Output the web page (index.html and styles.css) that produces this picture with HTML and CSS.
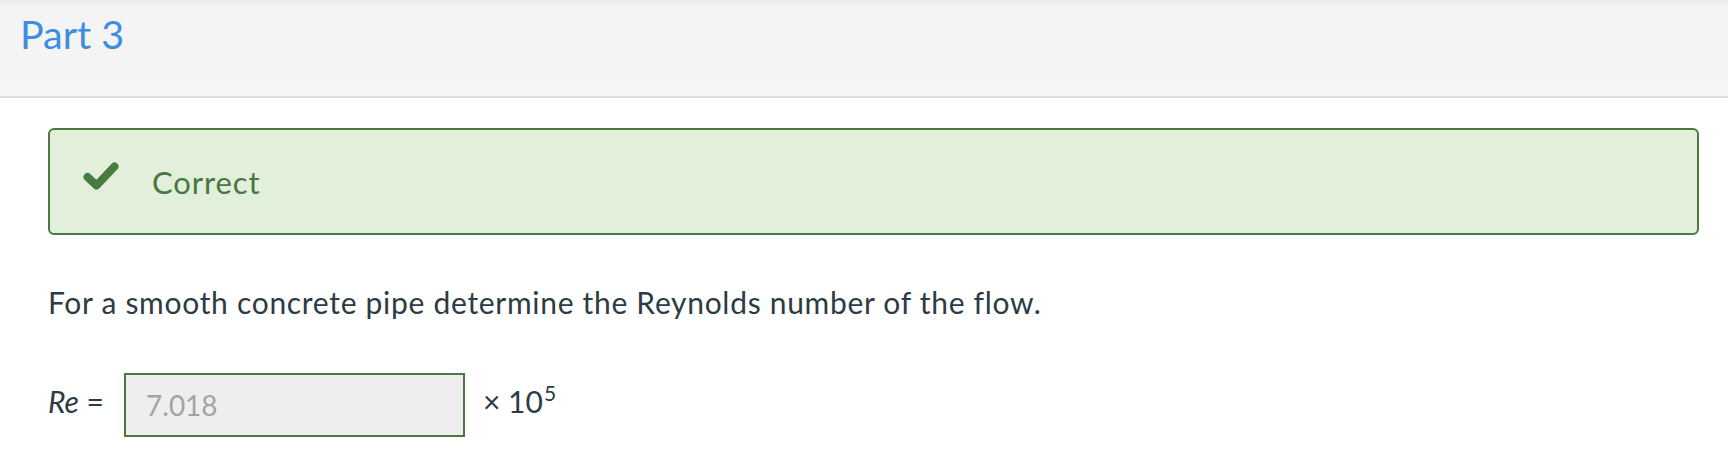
FILE: index.html
```html
<!DOCTYPE html>
<html lang="en">
<head>
<meta charset="utf-8">
<title>Part 3</title>
<link rel="stylesheet" href="styles.css">
</head>
<body>
<header class="part-header">
  <h2 class="part-title">Part 3</h2>
</header>
<main class="content">
  <div class="alert-correct">
    <svg class="check-icon" width="36" height="28" viewBox="0 0 36 28" aria-hidden="true">
      <polyline points="4.5,15 13.5,23.5 31.5,4.5" fill="none" stroke="#497a3f" stroke-width="8" stroke-linecap="round" stroke-linejoin="round"/>
    </svg>
    <span class="alert-text">Correct</span>
  </div>
  <p class="question">For a smooth concrete pipe determine the Reynolds number of the flow.</p>
  <div class="answer-row">
    <span class="answer-label"><i>Re</i> =</span>
    <div class="answer-input">7.018</div>
    <span class="answer-unit">× 10<sup>5</sup></span>
  </div>
</main>
</body>
</html>
```

FILE: styles.css
```css
html, body {
  margin: 0;
  padding: 0;
  background: #ffffff;
  font-family: Lato, "Open Sans", "Liberation Sans", sans-serif;
  color: #2d3b45;
}

.part-header {
  height: 96px;
  background: linear-gradient(to bottom, #ebebeb 0px, #f4f4f4 6px, #f5f5f5 100%);
  border-bottom: 2px solid #dcdcdc;
  padding-left: 20px;
  box-sizing: content-box;
}

.part-title {
  margin: 0;
  padding-top: 9px;
  font-size: 39.5px;
  font-weight: 400;
  line-height: 50px;
  color: #3d8ee0;
}

.content {
  padding: 30px 29px 0 48px;
}

.alert-correct {
  box-sizing: border-box;
  height: 107px;
  border: 2px solid #4b7a40;
  border-radius: 6px;
  background: #e2efdb;
  display: flex;
  align-items: center;
}

.check-icon {
  align-self: flex-start;
  margin-top: 32px;
  margin-left: 33px;
  flex: none;
}

.alert-text {
  margin-left: 33px;
  font-size: 31px;
  line-height: 36px;
  letter-spacing: 0.9px;
  color: #4a7641;
}

.question {
  margin: 45px 0 0 0;
  font-size: 30px;
  line-height: 45px;
  letter-spacing: 0.7px;
  color: #2d3b45;
}

.answer-row {
  margin-top: 48px;
  display: flex;
  align-items: flex-start;
}

.answer-label {
  margin-top: 10px;
  font-size: 30px;
  line-height: 36px;
  color: #2d3b45;
  white-space: nowrap;
}

.answer-label i {
  font-style: italic;
}

.answer-input {
  box-sizing: border-box;
  margin-left: 20px;
  width: 341px;
  height: 64px;
  border: 2px solid #4b7a40;
  background: #eeeeee;
  padding-left: 20px;
  display: flex;
  align-items: center;
  font-size: 28px;
  color: #a3a3a3;
}

.answer-unit {
  margin-left: 18px;
  margin-top: 10px;
  font-size: 30px;
  line-height: 36px;
  color: #2d3b45;
  white-space: nowrap;
}

.answer-unit sup {
  font-size: 21px;
  line-height: 0;
  margin-left: 1px;
  vertical-align: 12px;
}
```
